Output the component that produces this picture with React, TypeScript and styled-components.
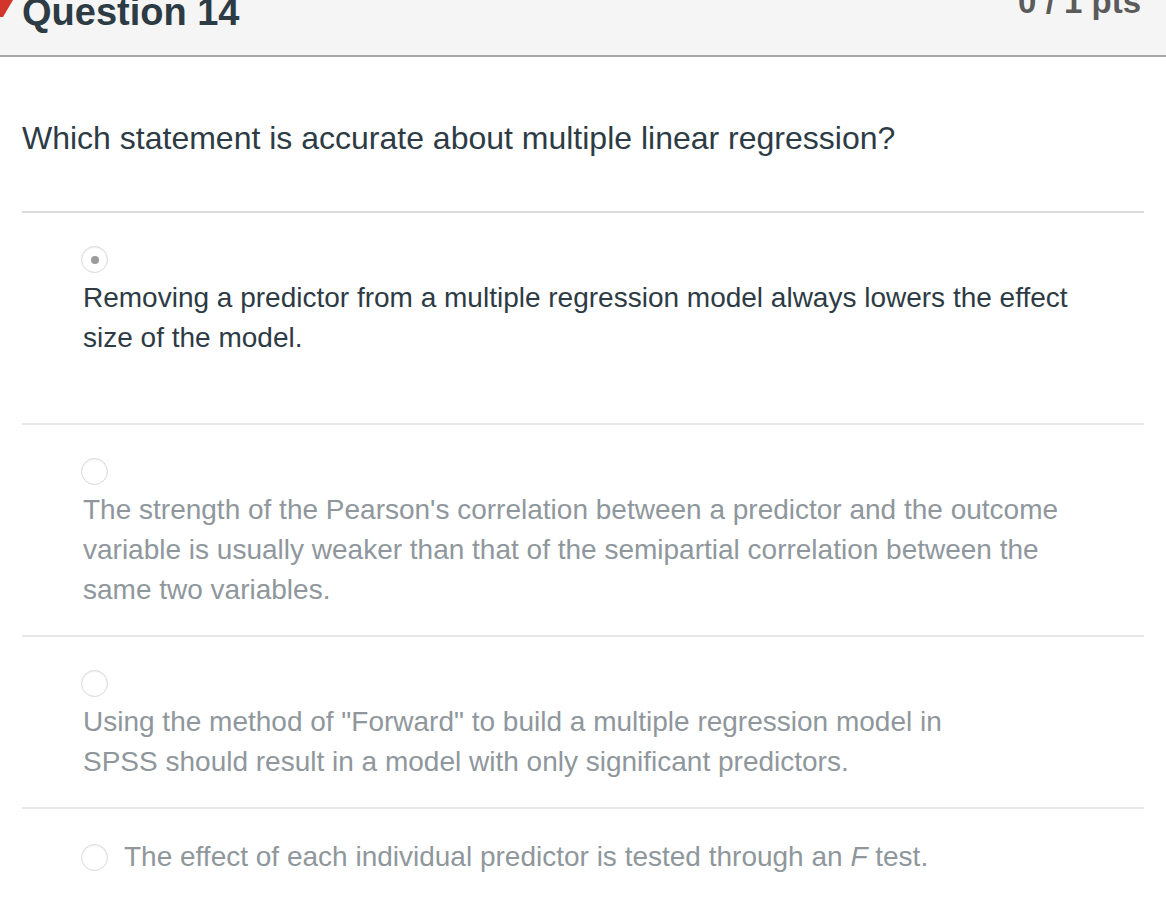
import React from "react";
import styled, { createGlobalStyle } from "styled-components";

const Global = createGlobalStyle`
  html, body { margin: 0; padding: 0; background: #ffffff; }
  body { font-family: "Liberation Sans", Arial, Helvetica, sans-serif; }
`;

const Page = styled.div`
  width: 1166px;
  min-height: 912px;
  background: #ffffff;
  overflow: hidden;
`;

const Header = styled.header`
  position: relative;
  height: 55px;
  background: #f5f5f5;
  border-bottom: 2px solid #a8a8a8;
  display: flex;
  justify-content: space-between;
  align-items: flex-start;
  padding: 0 25px 0 22px;
  overflow: hidden;
`;

const Marker = styled.svg`
  position: absolute;
  left: 0;
  top: 0;
`;

const Title = styled.h2`
  margin: -7px 0 0 0;
  font-size: 38px;
  line-height: 38px;
  font-weight: 700;
  color: #2d3b45;
`;

const Points = styled.div`
  margin-top: -15px;
  font-size: 33px;
  line-height: 33px;
  font-weight: 700;
  color: #5b5b5b;
`;

const Body = styled.main`
  padding: 0 22px;
`;

const QuestionText = styled.div`
  padding: 61px 0 53px 0;
  font-size: 32px;
  line-height: 40px;
  color: #2d3b45;
  border-bottom: 2px solid #dcdcdc;
`;

const Answer = styled.div<{ $top: number; $bottom: number; $inline?: boolean }>`
  display: flex;
  flex-direction: ${(p) => (p.$inline ? "row" : "column")};
  align-items: ${(p) => (p.$inline ? "center" : "flex-start")};
  gap: ${(p) => (p.$inline ? "16px" : "5px")};
  padding: ${(p) => p.$top}px 0 ${(p) => p.$bottom}px 59px;
  border-bottom: 2px solid #e8e8e8;
  &:last-child { border-bottom: none; }
`;

const Radio = styled.span<{ $checked?: boolean }>`
  flex: none;
  width: 25px;
  height: 25px;
  border-radius: 50%;
  border: 1px solid #d9d9d9;
  background: #ffffff;
  box-shadow: inset 0 1px 2px rgba(0, 0, 0, 0.06);
  display: flex;
  align-items: center;
  justify-content: center;
  &::after {
    content: "";
    display: ${(p) => (p.$checked ? "block" : "none")};
    width: 8px;
    height: 8px;
    border-radius: 50%;
    background: #9b9b9b;
  }
`;

const AnswerText = styled.div<{ $selected?: boolean; $inline?: boolean }>`
  font-size: 28px;
  line-height: 40px;
  color: ${(p) => (p.$selected ? "#2d3b45" : "#8f979d")};
  padding-left: ${(p) => (p.$inline ? "0" : "2px")};
`;

const answers = [
  {
    text: (
      <>
        Removing a predictor from a multiple regression model always lowers the effect
        <br />
        size of the model.
      </>
    ),
    selected: true,
    bottom: 65,
  },
  {
    text: (
      <>
        The strength of the Pearson's correlation between a predictor and the outcome
        <br />
        variable is usually weaker than that of the semipartial correlation between the
        <br />
        same two variables.
      </>
    ),
    selected: false,
    bottom: 25,
  },
  {
    text: (
      <>
        Using the method of "Forward" to build a multiple regression model in
        <br />
        SPSS should result in a model with only significant predictors.
      </>
    ),
    selected: false,
    bottom: 25,
  },
];

export default function App() {
  return (
    <Page>
      <Global />
      <Header>
        <Marker width="14" height="18" viewBox="0 0 14 18">
          <polygon points="0,0 13,0 3,17 0,17" fill="#d1352b" />
        </Marker>
        <Title>Question 14</Title>
        <Points>0 / 1 pts</Points>
      </Header>
      <Body>
        <QuestionText>Which statement is accurate about multiple linear regression?</QuestionText>
        {answers.map((a, i) => (
          <Answer key={i} $top={33} $bottom={a.bottom}>
            <Radio $checked={a.selected} />
            <AnswerText $selected={a.selected}>{a.text}</AnswerText>
          </Answer>
        ))}
        <Answer $top={28} $bottom={30} $inline>
          <Radio />
          <AnswerText $inline>
            The effect of each individual predictor is tested through an <i>F</i> test.
          </AnswerText>
        </Answer>
      </Body>
    </Page>
  );
}
